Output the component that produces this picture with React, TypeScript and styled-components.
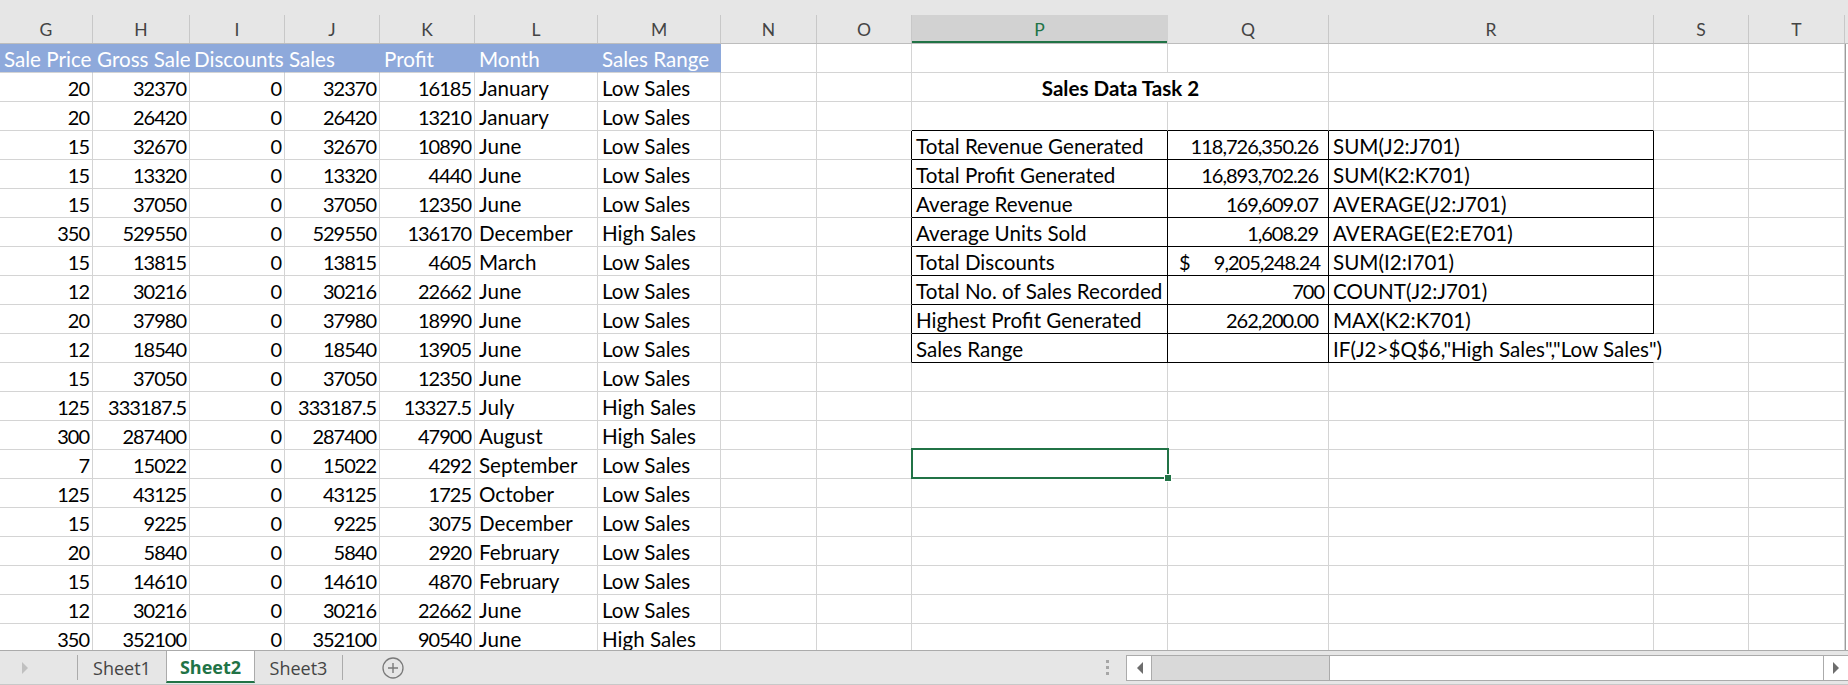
import React from 'react';
import styled, { createGlobalStyle, css } from 'styled-components';

// --- palette ---
const GREEN = '#217346';
const GRID = '#d4d4d4';
const FRAME = '#ababab';
const HEAD_BLUE = '#8ea9db';
const BLACK = '#000';

// column letters and pixel widths (G .. T)
const COLUMNS: [string, number][] = [
  ['G', 93], ['H', 97], ['I', 95], ['J', 95], ['K', 95], ['L', 123], ['M', 123],
  ['N', 96], ['O', 95], ['P', 256], ['Q', 161], ['R', 325], ['S', 95], ['T', 96],
];
const TEMPLATE = COLUMNS.map(([, w]) => `${w}px`).join(' ');
const ACTIVE_COLUMN = 'P';

const HEADERS = ['Sale Price', 'Gross Sale', 'Discounts', 'Sales', 'Profit', 'Month', 'Sales Range'];

const DATA: string[][] = [
  ['20', '32370', '0', '32370', '16185', 'January', 'Low Sales'],
  ['20', '26420', '0', '26420', '13210', 'January', 'Low Sales'],
  ['15', '32670', '0', '32670', '10890', 'June', 'Low Sales'],
  ['15', '13320', '0', '13320', '4440', 'June', 'Low Sales'],
  ['15', '37050', '0', '37050', '12350', 'June', 'Low Sales'],
  ['350', '529550', '0', '529550', '136170', 'December', 'High Sales'],
  ['15', '13815', '0', '13815', '4605', 'March', 'Low Sales'],
  ['12', '30216', '0', '30216', '22662', 'June', 'Low Sales'],
  ['20', '37980', '0', '37980', '18990', 'June', 'Low Sales'],
  ['12', '18540', '0', '18540', '13905', 'June', 'Low Sales'],
  ['15', '37050', '0', '37050', '12350', 'June', 'Low Sales'],
  ['125', '333187.5', '0', '333187.5', '13327.5', 'July', 'High Sales'],
  ['300', '287400', '0', '287400', '47900', 'August', 'High Sales'],
  ['7', '15022', '0', '15022', '4292', 'September', 'Low Sales'],
  ['125', '43125', '0', '43125', '1725', 'October', 'Low Sales'],
  ['15', '9225', '0', '9225', '3075', 'December', 'Low Sales'],
  ['20', '5840', '0', '5840', '2920', 'February', 'Low Sales'],
  ['15', '14610', '0', '14610', '4870', 'February', 'Low Sales'],
  ['12', '30216', '0', '30216', '22662', 'June', 'Low Sales'],
  ['350', '352100', '0', '352100', '90540', 'June', 'High Sales'],
];

// summary block in P4:R11 — value "$|..." means accounting format
const SUMMARY: [string, string, string][] = [
  ['Total Revenue Generated', '118,726,350.26', 'SUM(J2:J701)'],
  ['Total Profit Generated', '16,893,702.26', 'SUM(K2:K701)'],
  ['Average Revenue', '169,609.07', 'AVERAGE(J2:J701)'],
  ['Average Units Sold', '1,608.29', 'AVERAGE(E2:E701)'],
  ['Total Discounts', '$|9,205,248.24', 'SUM(I2:I701)'],
  ['Total No. of Sales Recorded', '700', 'COUNT(J2:J701)'],
  ['Highest Profit Generated', '262,200.00', 'MAX(K2:K701)'],
  ['Sales Range', '', 'IF(J2>$Q$6,"High Sales","Low Sales")'],
];

type Align = 'left' | 'right' | 'center' | 'spread';

interface CellSpec {
  text?: string;
  align?: Align;
  bold?: boolean;
  head?: boolean;
  numeric?: boolean;
  span?: number;
  right?: string;
  bottom?: string;
  padRight?: number;
  padLeft?: number;
  currency?: boolean;
  selected?: boolean;
}

const P = 9, Q = 10, R = 11, O = 8;

function buildRows(): CellSpec[][] {
  const rows: CellSpec[][] = [];
  for (let r = 0; r < 21; r++) {
    const row: CellSpec[] = COLUMNS.map(() => ({}));
    if (r === 0) {
      HEADERS.forEach((h, c) => { row[c] = { text: h, align: 'left', head: true, right: HEAD_BLUE }; });
    } else {
      DATA[r - 1].forEach((v, c) => {
        row[c] = c >= 5 ? { text: v, align: 'left' } : { text: v, align: 'right', numeric: true };
      });
    }
    rows.push(row);
  }

  // table top edge
  [P, Q, R].forEach(c => { rows[2][c] = { bottom: BLACK }; });

  SUMMARY.forEach(([label, value, formula], i) => {
    const row = rows[3 + i];
    const last = i === SUMMARY.length - 1;
    row[O] = { right: BLACK };
    row[P] = { text: label, align: 'left', right: BLACK, bottom: BLACK };
    if (value.startsWith('$|')) {
      row[Q] = { text: value.slice(2), align: 'spread', numeric: true, currency: true, right: BLACK, bottom: BLACK, padLeft: 11, padRight: 8 };
    } else {
      row[Q] = { text: value, align: 'right', numeric: true, right: BLACK, bottom: BLACK, padRight: value.includes('.') ? 10 : 4 };
    }
    // last formula spills into S, so its right edge is hidden
    row[R] = { text: formula, align: 'left', right: last ? 'transparent' : BLACK, bottom: BLACK };
  });

  // title, centred across P2:Q2
  rows[1][P] = { text: 'Sales Data Task 2', align: 'center', bold: true, span: 2 };
  rows[1].splice(Q, 1);

  rows[14][P] = { selected: true };
  return rows;
}

const ROWS = buildRows();

const JUSTIFY: Record<Align, string> = {
  left: 'flex-start',
  right: 'flex-end',
  center: 'center',
  spread: 'space-between',
};

// --- styles ---
const GlobalStyle = createGlobalStyle`
  html, body { margin: 0; padding: 0; background: #fff; overflow: hidden; }
  #root { width: 1848px; height: 685px; }
`;

const Window = styled.div`
  width: 1848px;
  height: 685px;
  display: flex;
  flex-direction: column;
  overflow: hidden;
  background: #fff;
  font-family: Lato, "Liberation Sans", sans-serif;
  color: #000;
`;

const TopStrip = styled.div`
  flex: none;
  height: 15px;
  background: #e6e6e6;
`;

const ColumnHeader = styled.div`
  flex: none;
  display: grid;
  grid-template-columns: ${TEMPLATE} 1fr;
  height: 29px;
  box-sizing: border-box;
  background: #e6e6e6;
  border-bottom: 1px solid #bdbdbd;
`;

const ColumnLetter = styled.div<{ $active?: boolean }>`
  display: flex;
  align-items: flex-end;
  justify-content: center;
  padding-bottom: 5px;
  box-sizing: border-box;
  border-right: 1px solid #c8c8c8;
  font-size: 17.5px;
  line-height: 17px;
  color: #444;

  ${p => p.$active && css`
    background: #d2d2d2;
    color: ${GREEN};
    border-right-color: #d2d2d2;
    box-shadow: inset 0 -2px 0 ${GREEN};
  `}
`;

const SheetArea = styled.div`
  flex: none;
  height: 606px;
  overflow: hidden;
  display: flex;
`;

const Grid = styled.div`
  width: 1845px;
  border-right: 1px solid #9b9b9b;
`;

const Row = styled.div`
  display: grid;
  grid-template-columns: ${TEMPLATE};
  height: 29px;
`;

const Cell = styled.div<{
  $align: Align; $right: string; $bottom: string; $head?: boolean; $bold?: boolean;
  $numeric?: boolean; $span: number; $padRight: number; $padLeft: number;
}>`
  position: relative;
  box-sizing: border-box;
  height: 29px;
  grid-column: span ${p => p.$span};
  display: flex;
  align-items: flex-end;
  justify-content: ${p => JUSTIFY[p.$align]};
  padding: 0 ${p => p.$padRight}px 3px ${p => p.$padLeft}px;
  border-right: 1px solid ${p => p.$right};
  border-bottom: 1px solid ${p => p.$bottom};
  background: ${p => (p.$head ? HEAD_BLUE : 'transparent')};
  color: ${p => (p.$head ? '#fff' : '#000')};
  font-size: ${p => (p.$numeric ? 20 : 20.6)}px;
  line-height: 20px;
  font-weight: ${p => (p.$bold ? 700 : 400)};
  letter-spacing: ${p => (p.$numeric ? '-1px' : 'normal')};
  white-space: nowrap;
`;

const Selection = styled.div`
  position: absolute;
  left: -1px;
  top: -2px;
  right: -2px;
  bottom: -1px;
  border: 2px solid ${GREEN};
  z-index: 2;
`;

const FillHandle = styled.div`
  position: absolute;
  right: -5px;
  bottom: -5px;
  width: 6px;
  height: 6px;
  background: ${GREEN};
  border: 1px solid #fff;
`;

// --- sheet tabs / scroll bar ---
const TabBar = styled.div`
  flex: none;
  height: 35px;
  box-sizing: border-box;
  display: flex;
  align-items: stretch;
  background: #e6e6e6;
  border-top: 1px solid ${FRAME};
  border-bottom: 1px solid #c8c8c8;
  font-family: "Open Sans", "Noto Sans", sans-serif;
`;

const NavArea = styled.div`
  width: 77px;
  display: flex;
  align-items: center;
  padding-left: 22px;
  box-sizing: border-box;
`;

const Divider = styled.div`
  width: 1px;
  margin: 4px 0;
  background: ${FRAME};
`;

const SheetTab = styled.div<{ $active?: boolean; $width: number }>`
  width: ${p => p.$width}px;
  box-sizing: border-box;
  display: flex;
  align-items: center;
  justify-content: center;
  padding-top: 1px;
  font-size: 18px;
  line-height: 1;
  color: #444;

  ${p => p.$active && css`
    background: #fff;
    color: ${GREEN};
    font-weight: 700;
    border-left: 1px solid ${FRAME};
    border-right: 1px solid ${FRAME};
    border-bottom: 2px solid ${GREEN};
    margin-bottom: 1px;
  `}
`;

const AddSheet = styled.div`
  margin-left: 39px;
  display: flex;
  align-items: center;
`;

const Spacer = styled.div`
  flex: 1;
`;

const Splitter = styled.div`
  width: 30px;
  box-sizing: border-box;
  padding-left: 10px;
  display: flex;
  flex-direction: column;
  justify-content: center;
  gap: 3px;
`;

const SplitterDot = styled.div`
  width: 3px;
  height: 3px;
  background: #a6a6a6;
`;

const HScroll = styled.div`
  width: 722px;
  margin: 4px 0 3px;
  box-sizing: border-box;
  display: flex;
  border: 1px solid ${FRAME};
  border-right: none;
`;

const ScrollButton = styled.div<{ $side: 'left' | 'right' }>`
  width: 24px;
  display: flex;
  align-items: center;
  justify-content: center;
  background: #fff;
  ${p => (p.$side === 'left' ? `border-right: 1px solid ${FRAME};` : `border-left: 1px solid ${FRAME};`)}
`;

const Track = styled.div`
  width: 177px;
  background: #d9d9d9;
`;

const Thumb = styled.div`
  flex: 1;
  background: #fff;
  border-left: 1px solid ${FRAME};
`;

const Triangle = ({ dir, color }: { dir: 'left' | 'right'; color: string }) => (
  <svg width="7" height="12" viewBox="0 0 7 12">
    <polygon fill={color} points={dir === 'right' ? '0,0 6,6 0,12' : '7,0 1,6 7,12'} />
  </svg>
);

export default function App() {
  return (
    <>
      <GlobalStyle />
      <Window>
        <TopStrip />
        <ColumnHeader>
          {COLUMNS.map(([letter]) => (
            <ColumnLetter key={letter} $active={letter === ACTIVE_COLUMN}>{letter}</ColumnLetter>
          ))}
          <div />
        </ColumnHeader>

        <SheetArea>
          <Grid>
            {ROWS.map((row, r) => (
              <Row key={r}>
                {row.map((cell, c) => (
                  <Cell
                    key={c}
                    $align={cell.align ?? 'left'}
                    $right={cell.right ?? GRID}
                    $bottom={cell.bottom ?? GRID}
                    $head={cell.head}
                    $bold={cell.bold}
                    $numeric={cell.numeric}
                    $span={cell.span ?? 1}
                    $padRight={cell.padRight ?? 3}
                    $padLeft={cell.padLeft ?? 4}
                  >
                    {cell.currency ? (
                      <>
                        <span>$</span>
                        <span>{cell.text}</span>
                      </>
                    ) : cell.text}
                    {cell.selected && (
                      <Selection>
                        <FillHandle />
                      </Selection>
                    )}
                  </Cell>
                ))}
              </Row>
            ))}
          </Grid>
        </SheetArea>

        <TabBar>
          <NavArea>
            <Triangle dir="right" color="#c0c0c0" />
          </NavArea>
          <Divider />
          <SheetTab $width={88}>Sheet1</SheetTab>
          <SheetTab $width={89} $active>Sheet2</SheetTab>
          <SheetTab $width={87}>Sheet3</SheetTab>
          <Divider />
          <AddSheet>
            <svg width="22" height="22" viewBox="0 0 22 22">
              <circle cx="11" cy="11" r="10" fill="none" stroke="#7a7a7a" strokeWidth="1.3" />
              <path d="M11 6v10M6 11h10" stroke="#7a7a7a" strokeWidth="1.4" />
            </svg>
          </AddSheet>
          <Spacer />
          <Splitter>
            <SplitterDot />
            <SplitterDot />
            <SplitterDot />
          </Splitter>
          <HScroll>
            <ScrollButton $side="left">
              <Triangle dir="left" color="#6d6d6d" />
            </ScrollButton>
            <Track />
            <Thumb />
            <ScrollButton $side="right">
              <Triangle dir="right" color="#6d6d6d" />
            </ScrollButton>
          </HScroll>
        </TabBar>
      </Window>
    </>
  );
}
